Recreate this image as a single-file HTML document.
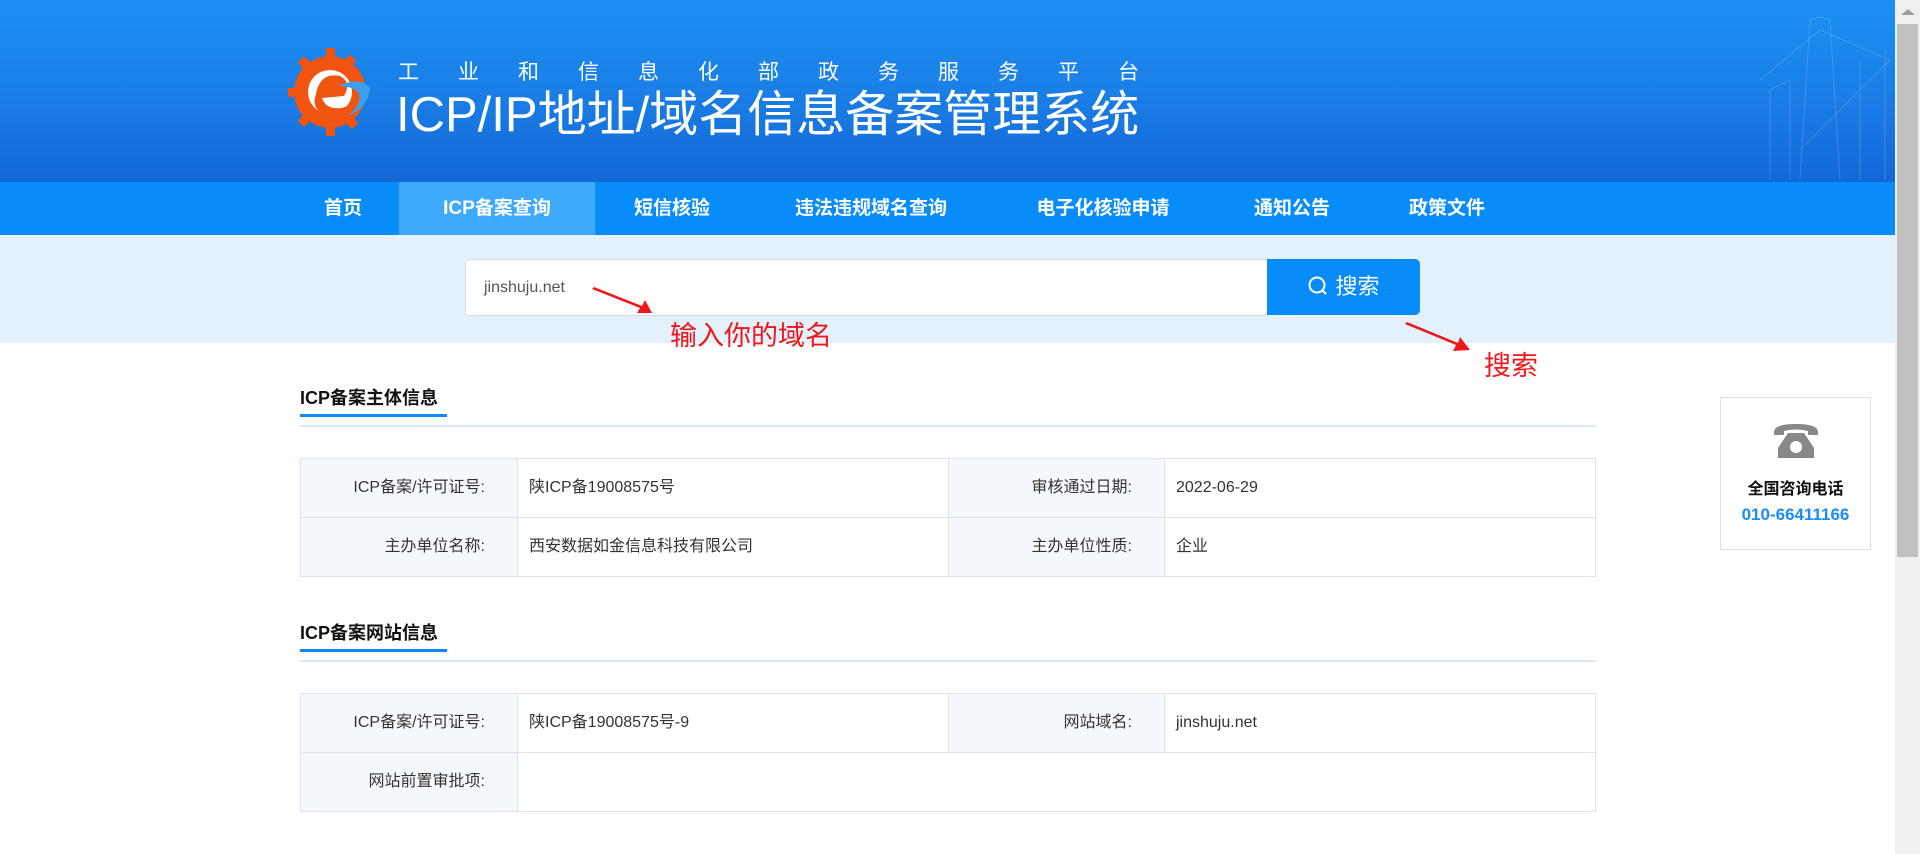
<!DOCTYPE html>
<html><head><meta charset="utf-8"><style>
*{margin:0;padding:0;box-sizing:border-box}
body{width:1920px;height:854px;overflow:hidden;background:#fff;font-family:"Liberation Sans","Noto Sans CJK SC",sans-serif;position:relative}
.page{position:absolute;left:0;top:0;width:1895px;height:854px}
.header{position:absolute;left:0;top:0;width:1895px;height:182px;background:linear-gradient(180deg,#1c90f2 0%,#1a7fe6 50%,#1468d6 100%);overflow:hidden}
.sub{position:absolute;left:398px;top:56px;color:#fff;font-size:21px;letter-spacing:39px;white-space:nowrap}
.title{position:absolute;left:396px;top:85px;color:#fff;font-size:49px;white-space:nowrap;line-height:60px}
.nav{position:absolute;left:0;top:182px;width:1895px;height:53px;background:#088cfa}
.nav span{position:absolute;top:0;height:53px;line-height:53px;color:#fff;font-weight:bold;font-size:19px;text-align:center}
.band{position:absolute;left:0;top:235px;width:1895px;height:108px;background:#e3f1fd}
.inp{position:absolute;left:465px;top:259px;width:803px;height:57px;background:#fff;border:1px solid #d8dde3;border-radius:4px 0 0 4px;font-size:16px;color:#555;padding-left:18px;line-height:55px}
.btn{position:absolute;left:1267px;top:259px;width:153px;height:56px;background:#088cfa;border-radius:0 5px 5px 0;color:#fff;font-size:22px;line-height:56px;text-align:center}
.h{position:absolute;left:300px;font-size:18px;font-weight:bold;color:#111}
.ul{position:absolute;left:300px;width:147px;height:3px;background:#1088f5}
.gl{position:absolute;left:300px;width:1296px;height:2px;background:#dbe8f4}
table{position:absolute;left:300px;width:1296px;border-collapse:collapse;font-size:16px;color:#333;table-layout:fixed}
td{border:1px solid #dde3ea;height:59px;vertical-align:middle;line-height:20px;font-family:"Liberation Sans","Noto Sans CJK SC",sans-serif}
td.l{background:#f5f9fd;text-align:right;padding-right:32px;width:217px}
td.v{padding-left:11px;width:431px}
td.l2{width:216px}
.ph{position:absolute;left:1720px;top:397px;width:151px;height:153px;border:1px solid #dcdfe4;background:#fff;text-align:center}
.red{position:absolute;color:#f0161a;font-size:27px;white-space:nowrap}
.sb{position:absolute;left:1895px;top:0;width:25px;height:854px;background:#f0f0f0}
.sbt{position:absolute;left:1897px;top:24px;width:21px;height:533px;background:#c1c1c1}
</style></head><body>
<div class="page">
<div class="header">
<svg style="position:absolute;left:1760px;top:0" width="140" height="182" viewBox="0 0 140 182" opacity=".25"><g fill="none" stroke="#9fd0ff" stroke-width="1"><path d="M50 20 L40 180 M70 20 L80 180 M50 20 Q60 15 70 20"/><path d="M10 90 L10 180 M30 80 L30 180 M10 90 L30 80"/><path d="M100 60 L100 180 M125 50 L125 180"/><path d="M0 80 L60 30 L130 60 L40 150"/></g></svg>
<svg style="position:absolute;left:286px;top:46px" width="94" height="92" viewBox="0 0 94 92">
<g fill="#f0540f"><circle cx="44" cy="46" r="36"/>
<rect x="40" y="2" width="9" height="10"/><rect x="40" y="80" width="9" height="10"/><rect x="2" y="42" width="10" height="9"/>
<rect x="14" y="12" width="9" height="9" transform="rotate(45 18 16)"/><rect x="14" y="70" width="9" height="9" transform="rotate(45 18 74)"/><rect x="62" y="72" width="9" height="9" transform="rotate(45 66 76)"/><rect x="60" y="10" width="9" height="9" transform="rotate(45 64 14)"/></g>
<circle cx="44" cy="46" r="22" fill="#fff"/>
<path d="M30 48 Q34 26 54 30 Q66 36 58 50 L36 52 Q40 64 56 62 L66 58 Q58 72 42 70 Q24 64 30 48Z" fill="#f0540f"/>
<path d="M52 40 Q74 30 84 42 Q82 62 62 70 Q80 54 70 44 Q62 40 52 40Z" fill="#3aa0f0"/>
</svg>
<div class="sub">工业和信息化部政务服务平台</div>
<div class="title">ICP/IP地址/域名信息备案管理系统</div>
</div>
<div class="nav">
<span style="left:300px;width:86px">首页</span>
<span style="left:399px;width:196px;background:#3fa9fc">ICP备案查询</span>
<span style="left:612px;width:120px">短信核验</span>
<span style="left:771px;width:200px">违法违规域名查询</span>
<span style="left:1003px;width:200px">电子化核验申请</span>
<span style="left:1232px;width:120px">通知公告</span>
<span style="left:1387px;width:120px">政策文件</span>
</div>
<div class="band"></div>
<div class="inp">jinshuju.net</div>
<div class="btn"><svg width="22" height="22" viewBox="0 0 22 22" style="vertical-align:-3px;margin-right:6px"><circle cx="10" cy="10" r="7.5" fill="none" stroke="#fff" stroke-width="2"/><path d="M15.5 15.5 L19 19" stroke="#fff" stroke-width="2"/></svg>搜索</div>
<svg style="position:absolute;left:0;top:0" width="1895" height="400"><polygon points="594,287 642,306 645,300 652,313 637,313 640,308 592,289" fill="#f0161a"/><polygon points="1407,322 1458,343 1460,337 1470,350 1453,351 1456,345 1405,324" fill="#f0161a"/></svg>
<div class="red" style="left:670px;top:314px">输入你的域名</div>
<div class="red" style="left:1484px;top:344px">搜索</div>

<div class="h" style="top:384px">ICP备案主体信息</div>
<div class="ul" style="top:414px"></div>
<div class="gl" style="top:425px"></div>
<table style="top:458px"><tr><td class="l">ICP备案/许可证号:</td><td class="v">陕ICP备19008575号</td><td class="l l2">审核通过日期:</td><td class="v">2022-06-29</td></tr>
<tr><td class="l">主办单位名称:</td><td class="v">西安数据如金信息科技有限公司</td><td class="l l2">主办单位性质:</td><td class="v">企业</td></tr></table>

<div class="h" style="top:619px">ICP备案网站信息</div>
<div class="ul" style="top:649px"></div>
<div class="gl" style="top:660px"></div>
<table style="top:693px"><tr><td class="l">ICP备案/许可证号:</td><td class="v">陕ICP备19008575号-9</td><td class="l l2">网站域名:</td><td class="v">jinshuju.net</td></tr>
<tr><td class="l">网站前置审批项:</td><td class="v" colspan="3"></td></tr></table>

<div class="ph">
<svg width="48" height="38" viewBox="0 0 48 38" style="margin-top:24px"><path d="M2 10 Q2 2 24 2 Q46 2 46 10 L46 13 L36 13 L36 9 Q24 6 12 9 L12 13 L2 13Z" fill="#888"/><path d="M16 11 L32 11 L42 26 L42 36 L6 36 L6 26Z" fill="#888"/><circle cx="24" cy="25" r="6" fill="#fff"/></svg>
<div style="font-size:16px;font-weight:bold;color:#111;margin-top:10px">全国咨询电话</div>
<div style="font-size:17px;font-weight:bold;color:#1a8cf5;margin-top:6px">010-66411166</div>
</div>
</div>
<div class="sb"></div><div class="sbt"></div>
<div style="position:absolute;left:1901px;top:9px;width:0;height:0;border-left:7px solid transparent;border-right:7px solid transparent;border-bottom:6px solid #a0a0a0"></div>
</body></html>
